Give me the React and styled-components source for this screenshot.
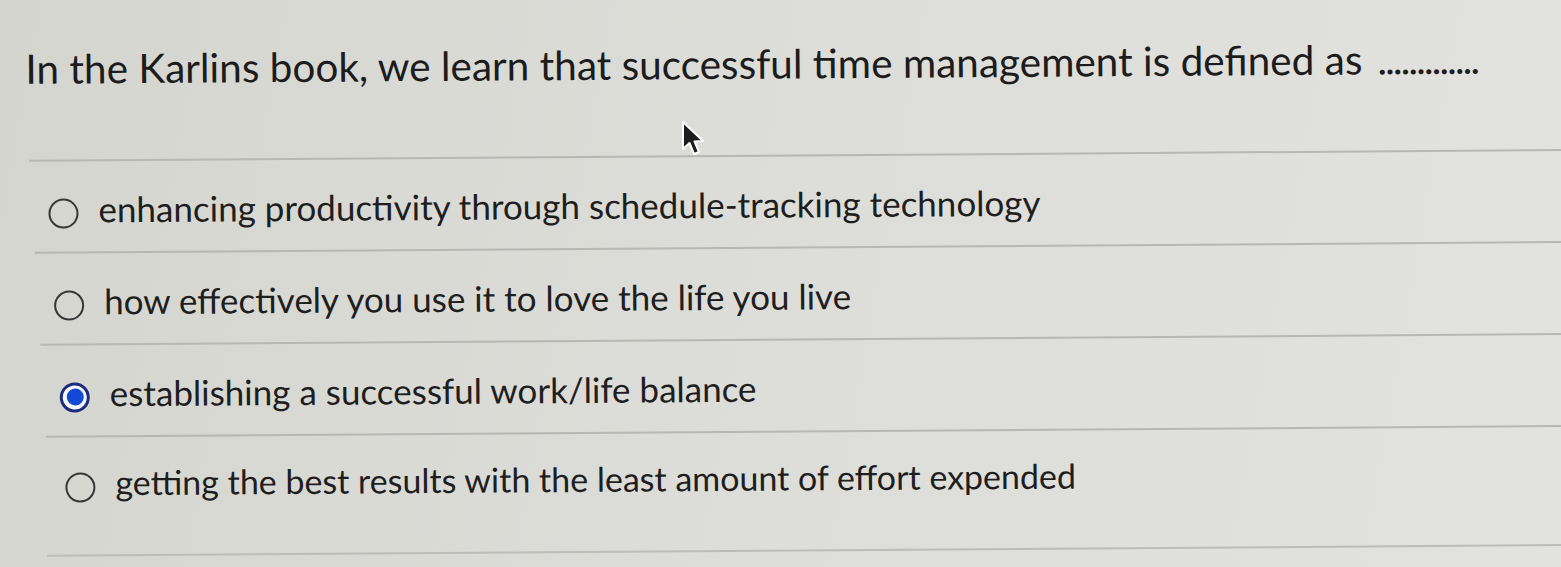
import React from 'react';
import styled, { createGlobalStyle } from 'styled-components';

const GlobalStyle = createGlobalStyle`
  html, body {
    margin: 0;
    padding: 0;
  }
  body {
    font-family: Lato, "Open Sans", "Liberation Sans", sans-serif;
    background: #dcdcd8;
  }
`;

const Page = styled.div`
  position: relative;
  width: 1561px;
  height: 567px;
  overflow: hidden;
  background: linear-gradient(100deg, #d5d5d0 0%, #dcdcd8 45%, #e2e2df 100%);
`;

const Sheet = styled.div`
  transform: rotate(-0.4deg);
  transform-origin: 0 0;
  width: 1600px;
`;

const Question = styled.h1`
  margin: 0;
  padding: 45px 0 0 25px;
  height: 112px;
  box-sizing: border-box;
  font-size: 40.5px;
  font-weight: 400;
  line-height: 1.2;
  color: #1c1c1c;
  white-space: nowrap;
`;

const Blank = styled.span`
  margin-left: 15px;
  letter-spacing: -1.8px;
`;

const Options = styled.ul`
  list-style: none;
  margin: 48px 0 0;
  padding: 0;
`;

const Row = styled.li`
  display: flex;
  align-items: center;
  gap: 20px;
  box-sizing: border-box;
  height: ${(p) => (p.last ? '121px' : '92px')};
  margin-left: ${(p) => p.indent}px;
  padding: 4px 0 ${(p) => (p.last ? '31px' : '0')} 19px;
  border-top: 2px solid #b7b7b3;
  border-bottom: ${(p) => (p.last ? '2px solid #bcbcb8' : 'none')};
`;

const Radio = styled.span`
  flex: none;
  box-sizing: border-box;
  width: 30px;
  height: 30px;
  margin-top: 9px;
  border-radius: 50%;
  border: ${(p) => (p.checked ? '3px solid #1d2b7c' : '2.5px solid #363636')};
  background: ${(p) => (p.checked ? '#f5f6fb' : 'transparent')};
  display: flex;
  align-items: center;
  justify-content: center;

  &::after {
    content: '';
    display: ${(p) => (p.checked ? 'block' : 'none')};
    width: 17px;
    height: 17px;
    border-radius: 50%;
    background: #1449d6;
  }
`;

const Label = styled.span`
  font-size: ${(p) => p.size}px;
  line-height: 1.2;
  color: #1e1e1e;
  white-space: nowrap;
`;

const Cursor = styled.svg`
  position: absolute;
  left: 680px;
  top: 120px;
  width: 28px;
  height: 40px;
`;

const answers = [
  'enhancing productivity through schedule-tracking technology',
  'how effectively you use it to love the life you live',
  'establishing a successful work/life balance',
  'getting the best results with the least amount of effort expended',
];

export default function App() {
  const selected = 2;

  return (
    <>
      <GlobalStyle />
      <Page>
        <Sheet>
          <Question>
            In the Karlins book, we learn that successful time management is defined as
            <Blank>.............</Blank>
          </Question>
          <Options>
            {answers.map((text, i) => {
              const last = i === answers.length - 1;
              return (
                <Row key={text} indent={28 + i * 5} last={last}>
                  <Radio checked={i === selected} />
                  <Label size={last ? 34 : 35}>{text}</Label>
                </Row>
              );
            })}
          </Options>
        </Sheet>
        <Cursor viewBox="0 0 28 40">
          <path
            d="M3 2 L3 29 L9.5 23 L14 34 L19 32 L14.5 21.5 L23 21 Z"
            fill="#1d1d1d"
            stroke="#ffffff"
            strokeWidth="2"
            strokeLinejoin="round"
          />
        </Cursor>
      </Page>
    </>
  );
}
